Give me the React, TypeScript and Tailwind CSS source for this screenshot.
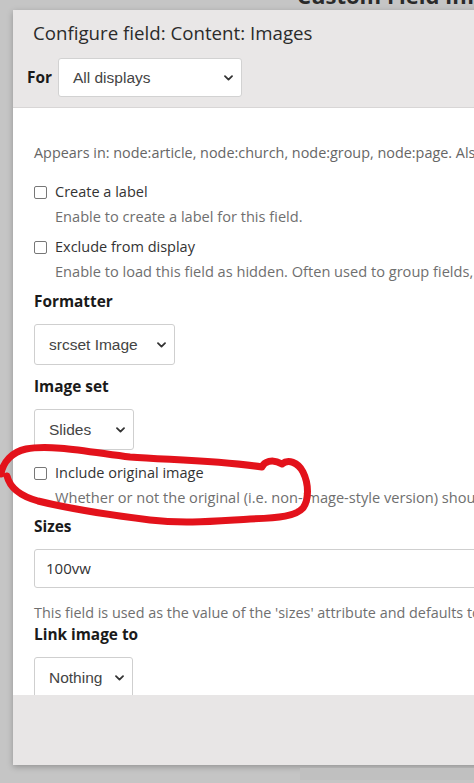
function Chevron() {
  return (
    <svg width="9" height="6" viewBox="0 0 9 6" className="shrink-0">
      <path d="M1 1.2 L4.5 4.6 L8 1.2" fill="none" stroke="#333" strokeWidth="1.8" strokeLinecap="round" strokeLinejoin="round" />
    </svg>
  );
}

function FakeSelect({ value, width }: { value: string; width: string }) {
  return (
    <div
      className={`${width} flex h-[41px] items-center justify-between rounded-[3px] border border-[#cfcfcf] bg-white pl-[14px] pr-[8px] font-['Liberation_Sans',Arial,sans-serif] text-[15.5px] text-[#444]`}
    >
      <span>{value}</span>
      <Chevron />
    </div>
  );
}

function Check({ label, help }: { label: string; help: string }) {
  return (
    <div>
      <div className="flex h-[20px] items-center gap-[8px] whitespace-nowrap text-[14.5px] text-[#333]">
        <span className="h-[13px] w-[13px] shrink-0 rounded-[2px] border border-[#777] bg-white" />
        <span>{label}</span>
      </div>
      <div className="mt-[4px] whitespace-nowrap pl-[21px] text-[14.6px] leading-[20px] text-[#6f6f6f]">{help}</div>
    </div>
  );
}

function Heading({ children }: { children: string }) {
  return <div className="text-[15.4px] font-bold leading-[22px] text-[#1a1a1a]">{children}</div>;
}

export default function App() {
  return (
    <div className="relative h-[783px] w-[474px] overflow-hidden bg-[#c5c5c5] font-['Open_Sans',sans-serif]">
      {/* page behind the overlay */}
      <div className="h-[10px] overflow-hidden pl-[297px]">
        <div className="-mt-[16px] whitespace-nowrap text-[22px] font-bold leading-[22px] text-[#2a2a2a]">
          Custom Field Info
        </div>
      </div>

      <div className="ml-[13px] w-[720px] shadow-[0_2px_6px_rgba(0,0,0,0.25)]">
        <div className="border-b border-[#d8d6d6] bg-[#e9e7e7] pb-[10px] pt-[10px]">
          <div className="pl-[20px] text-[18.7px] leading-[26px] text-[#2b2b2b]">Configure field: Content: Images</div>
          <div className="mt-[12px] flex items-center gap-[6px] pl-[14px]">
            <span className="text-[15.4px] font-bold text-[#1a1a1a]">For</span>
            <div className="flex h-[39px] w-[184px] items-center justify-between rounded-[3px] border border-[#d2d2d2] bg-white pl-[14px] pr-[8px] font-['Liberation_Sans',Arial,sans-serif] text-[15.5px] text-[#444]">
              <span>All displays</span>
              <Chevron />
            </div>
          </div>
        </div>

        <div className="h-[587px] overflow-hidden bg-white pl-[21px] pt-[35px]">
          <div className="whitespace-nowrap text-[14.4px] leading-[20px] text-[#666]">
            Appears in: node:article, node:church, node:group, node:page. Also used in other bundles.
          </div>
          <div className="mt-[19px]">
            <Check label="Create a label" help="Enable to create a label for this field." />
          </div>
          <div className="mt-[11px]">
            <Check
              label="Exclude from display"
              help="Enable to load this field as hidden. Often used to group fields, or to use in templates."
            />
          </div>
          <div className="mt-[10px]">
            <Heading>Formatter</Heading>
          </div>
          <div className="mt-[11px]">
            <FakeSelect value="srcset Image" width="w-[141px]" />
          </div>
          <div className="mt-[11px]">
            <Heading>Image set</Heading>
          </div>
          <div className="mt-[11px]">
            <FakeSelect value="Slides" width="w-[100px]" />
          </div>
          <div className="mt-[13px]">
            <Check
              label="Include original image"
              help="Whether or not the original (i.e. non-image-style version) should be included in the srcset."
            />
          </div>
          <div className="mt-[9px]">
            <Heading>Sizes</Heading>
          </div>
          <div className="mt-[11px] flex h-[39px] w-[600px] items-center rounded-[3px] border border-[#cfcfcf] bg-white pl-[11px] text-[15px] text-[#333]">
            100vw
          </div>
          <div className="mt-[15px] whitespace-nowrap text-[14.4px] leading-[20px] text-[#6f6f6f]">
            This field is used as the value of the 'sizes' attribute and defaults to 100vw.
          </div>
          <div className="mt-[1px]">
            <Heading>Link image to</Heading>
          </div>
          <div className="mt-[11px]">
            <FakeSelect value="Nothing" width="w-[99px]" />
          </div>
        </div>

        <div className="h-[70px] bg-[#e8e6e6]" />
      </div>

      <div className="mt-[3px] ml-[300px] h-[12px] bg-[#c0c0c0]" />

      {/* hand-drawn red annotation */}
      <svg className="pointer-events-none absolute left-0 top-0" width="474" height="783" viewBox="0 0 474 783">
        <path
          d="M1 474 C3 462 12 452 26 449 C50 444 90 452 130 457 C170 460 215 460 262 467 C264 462 272 458 282 464 C288 459 298 462 303 472 C309 484 309 500 303 508 C296 516 280 518 250 519 C215 521 185 524 150 520 C110 515 70 509 38 501 C20 496 10 488 7 476"
          fill="none"
          stroke="#e3121b"
          strokeWidth="7"
          strokeLinecap="round"
          strokeLinejoin="round"
        />
      </svg>
    </div>
  );
}
